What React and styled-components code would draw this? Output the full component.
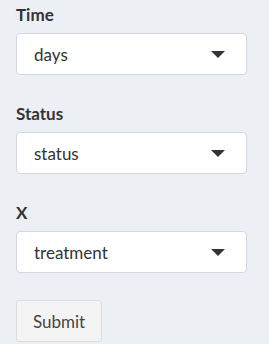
import * as React from 'react';
import styled, { createGlobalStyle } from 'styled-components';

const GlobalStyle = createGlobalStyle`
    html, body {
        margin: 0;
        padding: 0;
        background: #ecf0f5;
    }
    body {
        font-family: Lato, "Open Sans", "Liberation Sans", sans-serif;
        color: #333;
    }
`;

const Wrapper = styled.div`
    display: flex;
    flex-direction: column;
    gap: 26px;
    padding: 2px 22px 0 16px;
    width: 231px;
`;

const Group = styled.div`
    display: flex;
    flex-direction: column;
    gap: 6px;
`;

const Label = styled.label`
    font-size: 17px;
    font-weight: 700;
    line-height: 25px;
    color: #333;
`;

const SelectBox = styled.div`
    display: flex;
    align-items: center;
    justify-content: space-between;
    box-sizing: border-box;
    height: 42px;
    padding: 0 21px 0 17px;
    background: #fff;
    border: 1px solid #d2d6de;
    border-radius: 4px;
    font-size: 17px;
    color: #333;
`;

const Caret = styled.span`
    width: 0;
    height: 0;
    border-left: 7px solid transparent;
    border-right: 7px solid transparent;
    border-top: 7px solid #333;
`;

const Button = styled.button`
    align-self: flex-start;
    box-sizing: border-box;
    height: 42px;
    width: 86px;
    margin-top: 1px;
    background: #f4f4f4;
    border: 1px solid #ddd;
    border-radius: 3px;
    font-family: inherit;
    font-size: 17px;
    color: #444;
`;

const fields = [
    { label: 'Time', value: 'days' },
    { label: 'Status', value: 'status' },
    { label: 'X', value: 'treatment' },
];

export default function App() {
    return (
        <>
            <GlobalStyle />
            <Wrapper>
                {fields.map(f => (
                    <Group key={f.label}>
                        <Label>{f.label}</Label>
                        <SelectBox>
                            <span>{f.value}</span>
                            <Caret />
                        </SelectBox>
                    </Group>
                ))}
                <Button>Submit</Button>
            </Wrapper>
        </>
    );
}
